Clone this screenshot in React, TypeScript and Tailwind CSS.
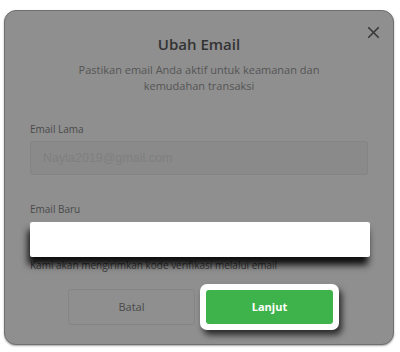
import { X } from 'lucide-react'

export default function App() {
  return (
    <div className="w-[400px] h-[352px] bg-white pt-[10px] pl-[4px]" style={{ fontFamily: '"Open Sans", "Noto Sans", sans-serif' }}>
      {/* Dimmed modal */}
      <div className="relative w-[390px] h-[335px] rounded-[12px] border border-[#6f6f6f] bg-[#8f8f8f] shadow-[0_1px_2px_rgba(0,0,0,0.35)] px-[25px]">
        <button className="absolute right-[10px] top-[12px] text-[#3c3c3c]">
          <X className="h-[19px] w-[19px]" strokeWidth={2.2} />
        </button>

        <h2 className="pt-[23px] text-center text-[15px] font-semibold leading-[20px] text-[#333333]">Ubah Email</h2>
        <p className="mt-[8px] px-[40px] text-center text-[11px] leading-[16px] text-[#555555]">
          Pastikan email Anda aktif untuk keamanan dan kemudahan transaksi
        </p>

        <div className="mt-[28px]">
          <label className="block text-[10px] leading-[14px] text-[#4a4a4a]">Email Lama</label>
          <div className="mt-[5px] flex h-[34px] w-[338px] items-center rounded-[3px] border border-[#848484] bg-[#8a8a8a] px-[12px] text-[12.5px] text-[#7f7f7f]" style={{ fontFamily: '"Liberation Sans", Arial, sans-serif' }}>
            Nayla2019@gmail.com
          </div>
        </div>

        <div className="mt-[27px]">
          <label className="block text-[10px] leading-[14px] text-[#4a4a4a]">Email Baru</label>
          <div className="relative z-10 mt-[6px] h-[35px] w-[340px] rounded-[2px] bg-white shadow-[-2px_8px_7px_rgba(0,0,0,0.9)]" />
          <p className="mt-[1px] text-[10px] leading-[14px] text-[#3a3a3a]">
            Kami akan mengirimkan kode verifikasi melalui email
          </p>
        </div>

        <div className="mt-[12px] flex items-center pl-[38px]">
          <button className="h-[36px] w-[127px] rounded-[3px] border border-[#858585] text-[11px] font-medium text-[#4a4a4a]">
            Batal
          </button>
          <div className="ml-[5px] rounded-[7px] bg-white p-[6px] shadow-[3px_5px_6px_rgba(0,0,0,0.7)]">
            <button className="h-[34px] w-[127px] rounded-[3px] bg-[#3fb34b] text-[11px] font-bold text-white">
              Lanjut
            </button>
          </div>
        </div>
      </div>
    </div>
  )
}
